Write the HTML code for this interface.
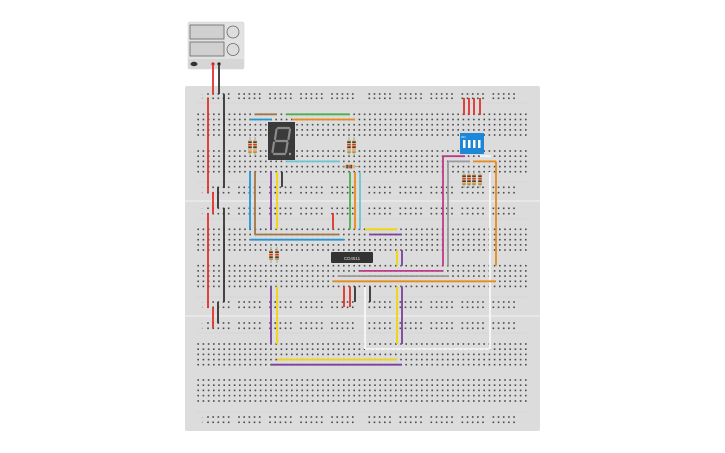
<!DOCTYPE html>
<html><head><meta charset="utf-8"><style>
html,body{margin:0;padding:0;background:#fff;width:725px;height:453px;overflow:hidden}
svg{display:block}
</style></head><body>
<svg id="s" width="725" height="453" viewBox="0 0 725 453" xmlns="http://www.w3.org/2000/svg" font-family="Liberation Sans, sans-serif">
<rect x="188" y="22" width="56" height="47" rx="2" fill="#e2e2e2" stroke="#d0d0d0" stroke-width="0.5"/>
<rect x="190" y="25" width="34" height="14" fill="#d0d0d0" stroke="#666" stroke-width="0.8"/>
<rect x="190" y="42" width="34" height="14" fill="#d0d0d0" stroke="#666" stroke-width="0.8"/>
<circle cx="233" cy="32" r="6" fill="#ddd" stroke="#666" stroke-width="0.8"/>
<circle cx="233" cy="49.5" r="6" fill="#ddd" stroke="#666" stroke-width="0.8"/>
<rect x="188" y="59" width="56" height="10" fill="#d6d6d6"/>
<ellipse cx="194" cy="64" rx="3.5" ry="2.2" fill="#333"/>
<circle cx="213" cy="64" r="1.6" fill="#d22"/>
<circle cx="219" cy="64" r="1.6" fill="#222"/>
<rect x="185" y="86" width="355" height="345" rx="2" fill="#dcdcdc"/>
<line x1="185" y1="201" x2="540" y2="201" stroke="#f2f2f2" stroke-width="1"/>
<line x1="185" y1="316" x2="540" y2="316" stroke="#f2f2f2" stroke-width="1"/>
<g id="dots" fill="#4a4a4a"></g>
<g id="lines" stroke="#cfcfcf" stroke-width="0.6"></g>
<g id="wires" stroke-width="1.8" stroke-linecap="butt"></g>
<rect x="268" y="122" width="27" height="38" fill="#3a3a3a"/>
<g stroke="#8a8a8a" stroke-width="2.2" fill="none" stroke-linecap="round">
<path d="M278 128 H289 M276.5 129.5 L275 139 M290 129.5 L288.5 139 M276 141 H287 M274 142.5 L272.5 152 M287.5 142.5 L286 152 M274 154 H285"/>
</g>
<circle cx="290" cy="154" r="1.2" fill="#999"/>
<rect x="460" y="133" width="24" height="21" fill="#1e88d8"/>
<text x="461" y="138" font-size="3" fill="#fff">ON</text>
<g fill="#fff"><rect x="463" y="140" width="2.5" height="8"/><rect x="468" y="140" width="2.5" height="8"/><rect x="473" y="140" width="2.5" height="8"/><rect x="478" y="140" width="2.5" height="8"/></g>
<rect x="331" y="252" width="42" height="11" rx="1" fill="#333"/>
<text x="352" y="260" font-size="4.5" fill="#ddd" text-anchor="middle">CD4511</text>
<g id="res"></g>
</svg>
<script>
var NS="http://www.w3.org/2000/svg";
function el(p,t,a){var e=document.createElementNS(NS,t);for(var k in a)e.setAttribute(k,a[k]);document.getElementById(p).appendChild(e);return e;}
var P=5.2;
var mains=[[114.3,119.5,124.7,129.9,135],[151,156.2,161.4,166.6,171.7],[229.3,234.5,239.7,244.9,250],[265.7,270.9,276.1,281.3,286.4],[344,349.2,354.4,359.6,364.7],[380,385.2,390.4,395.6,401]];
mains.forEach(function(g){g.forEach(function(y){for(var x=198.2;x<528;x+=P)el("dots","rect",{x:x-0.8,y:y-0.8,width:1.6,height:1.6});});});
var rails=[94,98.3,187.3,192.7,208.3,213.7,302,307.3,323,328.3,417,422.3];
rails.forEach(function(y,i){[208,369.3].forEach(function(x0){for(var g=0;g<5;g++)for(var d=0;d<5;d++){var x=x0+g*6*5.17+d*5.17;el("dots","rect",{x:x-0.8,y:y-0.8,width:1.6,height:1.6});}});
 var t=el("wires","text",{x:201,y:y+1.2,"font-size":"4",fill:(i%2?"#e66":"#6ad"),stroke:"none"});t.textContent=i%2?"+":"–";});
[103,182,219,297,333,412].forEach(function(y){el("lines","line",{x1:197,y1:y,x2:528,y2:y});});
var C={r:"#e0302a",k:"#333",b:"#2196d8",n:"#a0764a",g:"#4caf50",o:"#e88a1a",c:"#6cc4d4",p:"#7b3f9e",y:"#f2d600",m:"#c0398a",s:"#9a9a9a",w:"#fff"};
var W=[
["r",213,64,213,94],["k",219,64,219,94],["r",208,98,208,193],["k",224,94,224,188],["r",213,192,213,214],["k",218,187,218,208],
["r",208,213,208,308],["k",224,208,224,302],["r",213,307,213,328],["k",218,302,218,323],
["r",464,98,464,115],["r",469,98,469,115],["r",474,98,474,115],["r",480,98,480,115],
["n",255,114.3,277,114.3],["g",286,114.3,350,114.3],["b",250,119.5,272,119.5],["o",292,119.5,355,119.5],
["c",286,161.4,340,161.4],["m",443,156.2,465,156.2],["s",448,161.4,470,161.4],["w",480,156.2,491,156.2],["o",473,161.4,496,161.4],
["b",250,171.7,250,229.3],["n",255,171.7,255,234.5],["p",271,171.7,271,229.3],["y",277,171.7,277,229.3],["k",282,171.7,282,187],
["g",350,172,350,229.3],["o",355,172,355,229.3],["c",360,172,360,229.3],["r",333,213,333,229.3],
["y",365,229.3,397,229.3],["p",369,234.5,402,234.5],["n",255,234.5,339,234.5],["b",250,239.7,344,239.7],
["m",443,156.2,443,265.7],["s",448,161.4,448,265.7],["w",490,172,490,349],["o",496,161.4,496,265.7],
["y",397,250,397,265.7],["p",402,250,402,265.7],
["m",360,270.9,443,270.9],["s",338,276.1,449,276.1],["o",333,281.3,496,281.3],
["r",344,286.4,344,307],["r",350,286.4,350,307],["k",355,286.4,355,302],["k",370,286.4,370,302],
["w",365,287,365,349],["w",365,349,490,349],
["p",271,286.4,271,344],["y",277,286.4,277,344],["y",397,286.4,397,344],["p",402,286.4,402,344],
["y",277,359.6,397,359.6],["p",271,364.7,402,364.7]
];
W.forEach(function(w){var col=C[w[0]];el("wires","line",{x1:w[1],y1:w[2],x2:w[3],y2:w[4],stroke:col});
 if(w[0]=="w")el("wires","line",{x1:w[1],y1:w[2],x2:w[3],y2:w[4],stroke:"#ccc","stroke-width":"0.3"});});
function resV(x,y1,y2){el("res","line",{x1:x,y1:y1,x2:x,y2:y2,stroke:"#999","stroke-width":"0.8"});
 el("res","rect",{x:x-1.8,y:y1+3,width:3.6,height:y2-y1-6,rx:1,fill:"#d8b47a"});
 var ys=[y1+4.5,y1+7,y1+9.5,y2-4.5];var cs=["#222","#e03020","#222","#b08a30"];ys.forEach(function(y,i){el("res","rect",{x:x-1.8,y:y,width:3.6,height:1.3,fill:cs[i]});});}
function resH(y,x1,x2){el("res","line",{x1:x1,y1:y,x2:x2,y2:y,stroke:"#999","stroke-width":"0.8"});
 el("res","rect",{x:x1+3,y:y-1.8,width:x2-x1-6,height:3.6,rx:1,fill:"#d8b47a"});
 [x1+4.5,x1+6.5,x1+8.5].forEach(function(x,i){el("res","rect",{x:x,y:y-1.8,width:1.2,height:3.6,fill:["#222","#e03020","#222"][i]});});}
resV(250,137,156);resV(255,137,156);resV(349,137,156);resV(354,137,156);
resH(166.6,342,358);
resV(464,171,188);resV(469,171,188);resV(474,171,188);resV(480,171,188);
resV(271,247,263);resV(277,247,263);
</script>
</body></html>
